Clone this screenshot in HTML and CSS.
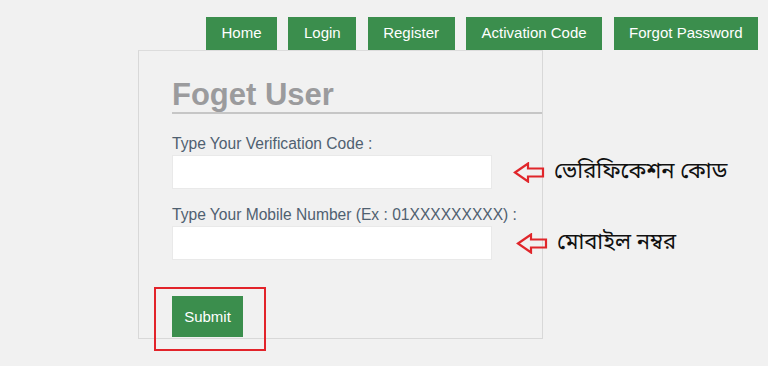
FILE: index.html
```html
<!DOCTYPE html>
<html lang="en">
<head>
	<meta charset="UTF-8">
	<title>Foget User</title>
<link rel="stylesheet" href="styles.css">
</head>
<body>
<div class="nav">
	<a href="#">Home</a>
	<a href="#">Login</a>
	<a href="#">Register</a>
	<a href="#">Activation Code</a>
	<a href="#">Forgot Password</a>
</div>
<div class="panel">
	<h2>Foget User</h2>
	<label>Type Your Verification Code :</label>
	<div class="field">
		<input type="text">
		<div class="note">
			<svg width="32" height="21" viewBox="0 0 32 21"><path d="M2 10.5 L15 1.5 L15 6.5 L30 6.5 L30 14.5 L15 14.5 L15 19.5 Z" fill="none" stroke="#e0262b" stroke-width="2.2"/></svg>
			<span>ভেরিফিকেশন কোড</span>
		</div>
	</div>
	<label class="second">Type Your Mobile Number (Ex : 01XXXXXXXXX) :</label>
	<div class="field">
		<input type="text">
		<div class="note note2">
			<svg width="32" height="21" viewBox="0 0 32 21"><path d="M2 10.5 L15 1.5 L15 6.5 L30 6.5 L30 14.5 L15 14.5 L15 19.5 Z" fill="none" stroke="#e0262b" stroke-width="2.2"/></svg>
			<span>মোবাইল নম্বর</span>
		</div>
	</div>
	<div class="submit">
		<button>Submit</button>
	</div>
</div>
</body>
</html>
```

FILE: styles.css
```css
*{margin:0;padding:0;box-sizing:border-box;}
body{background:#f1f1f1;font-family:"Liberation Sans",Arial,sans-serif;width:768px;height:366px;overflow:hidden;}
.nav{display:flex;justify-content:flex-end;gap:11.5px;padding:17px 10px 0 0;height:50px;}
.nav a{display:block;height:33px;line-height:32px;padding:0 15.5px;background:#3b8e4d;color:#fff;font-size:15px;text-decoration:none;}
.panel{width:405px;margin-left:138px;height:289px;border:1px solid #d8d8d8;border-top-color:#dcdcdc;padding:0 0 0 33px;}
.panel h2{margin-top:26px;font-size:31px;line-height:35px;font-weight:bold;color:#9b9b9d;border-bottom:2px solid #c6c6c6;}
.panel label{display:block;margin-top:21px;font-size:15.6px;line-height:18px;color:#4f6070;}
.panel label.second{margin-top:17px;}
.field{position:relative;width:320px;margin-top:2px;}
.field input{display:block;width:320px;height:34px;border:1px solid #e9e9e9;background:#fff;}
.note{position:absolute;left:341px;top:0;height:34px;display:flex;align-items:center;gap:9px;white-space:nowrap;}
.note span{font-family:"Noto Sans Bengali","Lohit Bengali","Noto Sans",sans-serif;font-size:22px;color:#111;}
.note2{left:344px;}
.submit{position:relative;margin-top:36px;width:70px;}
.submit::before{content:"";position:absolute;left:-18px;top:-9px;width:108px;height:60px;border:2.5px solid #e2232a;}
.submit button{display:block;width:71px;height:41px;border:none;background:#3b8e4d;color:#fff;font-family:"Liberation Sans",Arial,sans-serif;font-size:15px;}
```
